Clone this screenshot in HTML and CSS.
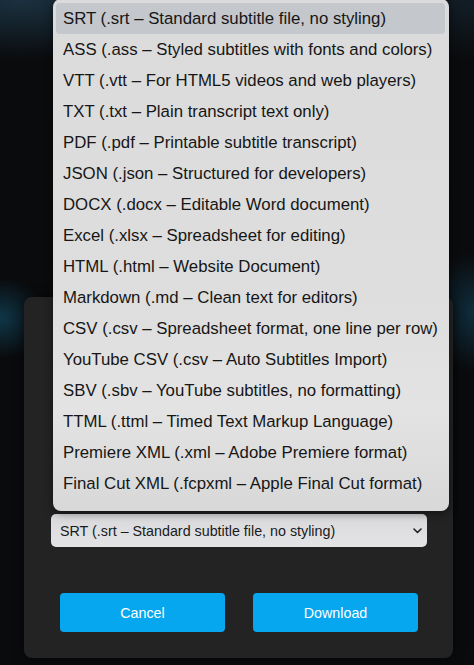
FILE: index.html
```html
<!DOCTYPE html>
<html lang="en">
<head>
<meta charset="utf-8">
<title>Download subtitles</title>
<link rel="stylesheet" href="styles.css">
</head>
<body>
<div class="stage">
  <div class="modal">
    <div class="select-wrap">
      <select class="format-select">
        <option>SRT (.srt – Standard subtitle file, no styling)</option>
      </select>
      <svg class="chevron" width="9" height="6" viewBox="0 0 9 6"><path d="M1 1l3.5 3.5L8 1" fill="none" stroke="#222" stroke-width="1.6" stroke-linecap="round" stroke-linejoin="round"/></svg>
    </div>
    <div class="actions">
      <button class="btn">Cancel</button>
      <button class="btn">Download</button>
    </div>
  </div>
</div>
<ul class="listbox">
  <li class="opt selected">SRT (.srt – Standard subtitle file, no styling)</li>
  <li class="opt">ASS (.ass – Styled subtitles with fonts and colors)</li>
  <li class="opt">VTT (.vtt – For HTML5 videos and web players)</li>
  <li class="opt">TXT (.txt – Plain transcript text only)</li>
  <li class="opt">PDF (.pdf – Printable subtitle transcript)</li>
  <li class="opt">JSON (.json – Structured for developers)</li>
  <li class="opt">DOCX (.docx – Editable Word document)</li>
  <li class="opt">Excel (.xlsx – Spreadsheet for editing)</li>
  <li class="opt">HTML (.html – Website Document)</li>
  <li class="opt">Markdown (.md – Clean text for editors)</li>
  <li class="opt">CSV (.csv – Spreadsheet format, one line per row)</li>
  <li class="opt">YouTube CSV (.csv – Auto Subtitles Import)</li>
  <li class="opt">SBV (.sbv – YouTube subtitles, no formatting)</li>
  <li class="opt">TTML (.ttml – Timed Text Markup Language)</li>
  <li class="opt">Premiere XML (.xml – Adobe Premiere format)</li>
  <li class="opt">Final Cut XML (.fcpxml – Apple Final Cut format)</li>
</ul>
</body>
</html>
```
FILE: styles.css
```css
html, body {
  margin: 0;
  height: 665px;
  overflow: hidden;
}
body {
  position: relative;
  font-family: "Liberation Sans", Arial, sans-serif;
  background:
    radial-gradient(ellipse 50px 40px at 0px 318px, rgba(20, 90, 120, 0.55), transparent),
    radial-gradient(ellipse 45px 60px at 474px 312px, rgba(20, 80, 110, 0.5), transparent),
    radial-gradient(ellipse 180px 60px at 20px 0px, rgba(40, 80, 105, 0.55), transparent),
    radial-gradient(ellipse 120px 60px at 474px 0px, rgba(30, 60, 80, 0.4), transparent),
    #0a0b0d;
}
.stage {
  box-sizing: border-box;
  height: 665px;
  padding: 297px 21px 7px 24px;
}
.modal {
  box-sizing: border-box;
  width: 429px;
  height: 361px;
  background: #232323;
  border-radius: 8px;
  padding: 217px 26px 26px 27px;
  display: flex;
  flex-direction: column;
  box-shadow: 0 0 12px rgba(0, 0, 0, 0.6);
}
.select-wrap {
  position: relative;
  height: 33px;
}
.format-select {
  appearance: none;
  -webkit-appearance: none;
  box-sizing: border-box;
  width: 100%;
  height: 33px;
  margin: 0;
  border: none;
  border-radius: 5px;
  padding: 0 0 0 9px;
  background: linear-gradient(#d9d9db, #e4e4e6);
  color: #1a1a1a;
  font-family: "Liberation Sans", Arial, sans-serif;
  font-size: 14.3px;
}
.chevron {
  position: absolute;
  right: 5px;
  top: 14px;
}
.actions {
  margin-top: 46px;
  padding: 0 9px;
  display: flex;
  gap: 28px;
}
.btn {
  flex: 1;
  height: 39px;
  border: none;
  border-radius: 4px;
  background: #06a7ee;
  color: #ffffff;
  font-family: "Liberation Sans", Arial, sans-serif;
  font-size: 14.3px;
}
.listbox {
  position: absolute;
  left: 53px;
  top: -1px;
  width: 396px;
  box-sizing: border-box;
  margin: 0;
  padding: 4px 4px 12px 3px;
  list-style: none;
  border-radius: 8px;
  background: linear-gradient(#dbdbdb, #dedede 60%, #e3e3e3 80%, #d8d8d8);
  box-shadow: 0 2px 8px rgba(0, 0, 0, 0.5);
}
.opt {
  height: 31px;
  line-height: 31px;
  padding-left: 7px;
  font-size: 16.8px;
  color: #161616;
  border-radius: 4px;
  white-space: nowrap;
}
.opt.selected {
  background: #c4c7cc;
}
```
